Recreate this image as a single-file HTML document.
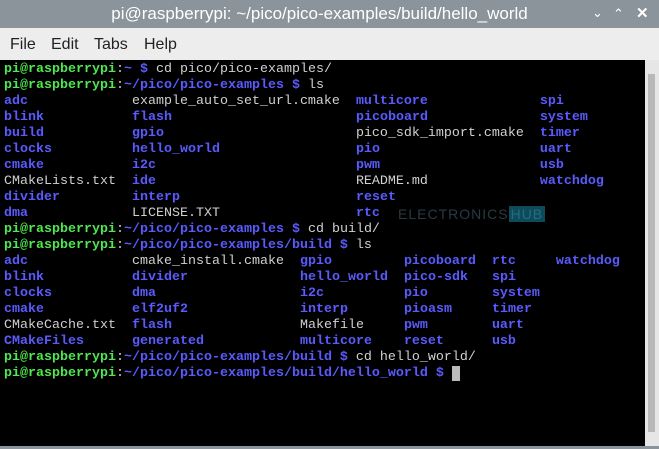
<!DOCTYPE html><html><head><style>
body{margin:0;width:659px;height:449px;overflow:hidden;background:#8b949b;font-family:"Liberation Sans",sans-serif}
#t{position:absolute;left:0;top:0;width:659px;height:28px;background:#8b949b;color:#fff;font-size:17px;line-height:28px;text-align:center;text-indent:-20px}
#m{position:absolute;left:0;top:28px;width:659px;height:32px;background:#ededed;font-size:16px;color:#222}
#m span{position:absolute;top:8px}
#term{position:absolute;left:0;top:60px;width:645px;height:386px;background:#000}
#sb{position:absolute;left:645px;top:60px;width:14px;height:386px;background:#e6e6e6}
#sb div{position:absolute;left:3px;top:14px;width:7px;height:358px;background:#b8b8b8}
pre{position:absolute;left:4px;top:62px;margin:0;font-family:"Liberation Mono",monospace;font-size:13.33px;line-height:16px;color:#d0d0d0}
.g{color:#4fe64f;font-weight:bold}.b{color:#5a5aff;font-weight:bold}
.c{background:#bbb}
#wm{position:absolute;left:398px;top:206px;font-size:14px;color:#2a3a44;letter-spacing:1px}
#wm b{background:#0f4a5a;color:#1f6f80;font-weight:normal;padding:0 2px}
</style></head><body>
<div id="t">pi@raspberrypi: ~/pico/pico-examples/build/hello_world</div>
<div style="position:absolute;left:592px;top:5px;color:#fff;font-size:13px">&#8964;</div>
<div style="position:absolute;left:613px;top:6px;color:#fff;font-size:13px">&#8963;</div>
<div style="position:absolute;left:636px;top:4px;color:#fff;font-size:15px;font-weight:bold">✕</div>
<div id="m"><span style="left:10px">File</span><span style="left:51px">Edit</span><span style="left:94px">Tabs</span><span style="left:144px">Help</span></div>
<div id="term"></div><div id="sb"><div></div></div>
<div id="wm">ELECTRONICS<b>HUB</b></div>
<pre><span class="g">pi@raspberrypi</span>:<span class="b">~ $</span> cd pico/pico-examples/
<span class="g">pi@raspberrypi</span>:<span class="b">~/pico/pico-examples $</span> ls
<span class="b">adc</span>             example_auto_set_url.cmake  <span class="b">multicore</span>              <span class="b">spi</span>
<span class="b">blink</span>           <span class="b">flash</span>                       <span class="b">picoboard</span>              <span class="b">system</span>
<span class="b">build</span>           <span class="b">gpio</span>                        pico_sdk_import.cmake  <span class="b">timer</span>
<span class="b">clocks</span>          <span class="b">hello_world</span>                 <span class="b">pio</span>                    <span class="b">uart</span>
<span class="b">cmake</span>           <span class="b">i2c</span>                         <span class="b">pwm</span>                    <span class="b">usb</span>
CMakeLists.txt  <span class="b">ide</span>                         README.md              <span class="b">watchdog</span>
<span class="b">divider</span>         <span class="b">interp</span>                      <span class="b">reset</span>
<span class="b">dma</span>             LICENSE.TXT                 <span class="b">rtc</span>
<span class="g">pi@raspberrypi</span>:<span class="b">~/pico/pico-examples $</span> cd build/
<span class="g">pi@raspberrypi</span>:<span class="b">~/pico/pico-examples/build $</span> ls
<span class="b">adc</span>             cmake_install.cmake  <span class="b">gpio</span>         <span class="b">picoboard</span>  <span class="b">rtc</span>     <span class="b">watchdog</span>
<span class="b">blink</span>           <span class="b">divider</span>              <span class="b">hello_world</span>  <span class="b">pico-sdk</span>   <span class="b">spi</span>
<span class="b">clocks</span>          <span class="b">dma</span>                  <span class="b">i2c</span>          <span class="b">pio</span>        <span class="b">system</span>
<span class="b">cmake</span>           <span class="b">elf2uf2</span>              <span class="b">interp</span>       <span class="b">pioasm</span>     <span class="b">timer</span>
CMakeCache.txt  <span class="b">flash</span>                Makefile     <span class="b">pwm</span>        <span class="b">uart</span>
<span class="b">CMakeFiles</span>      <span class="b">generated</span>            <span class="b">multicore</span>    <span class="b">reset</span>      <span class="b">usb</span>
<span class="g">pi@raspberrypi</span>:<span class="b">~/pico/pico-examples/build $</span> cd hello_world/
<span class="g">pi@raspberrypi</span>:<span class="b">~/pico/pico-examples/build/hello_world $</span> <span class="c"> </span></pre>
</body></html>
